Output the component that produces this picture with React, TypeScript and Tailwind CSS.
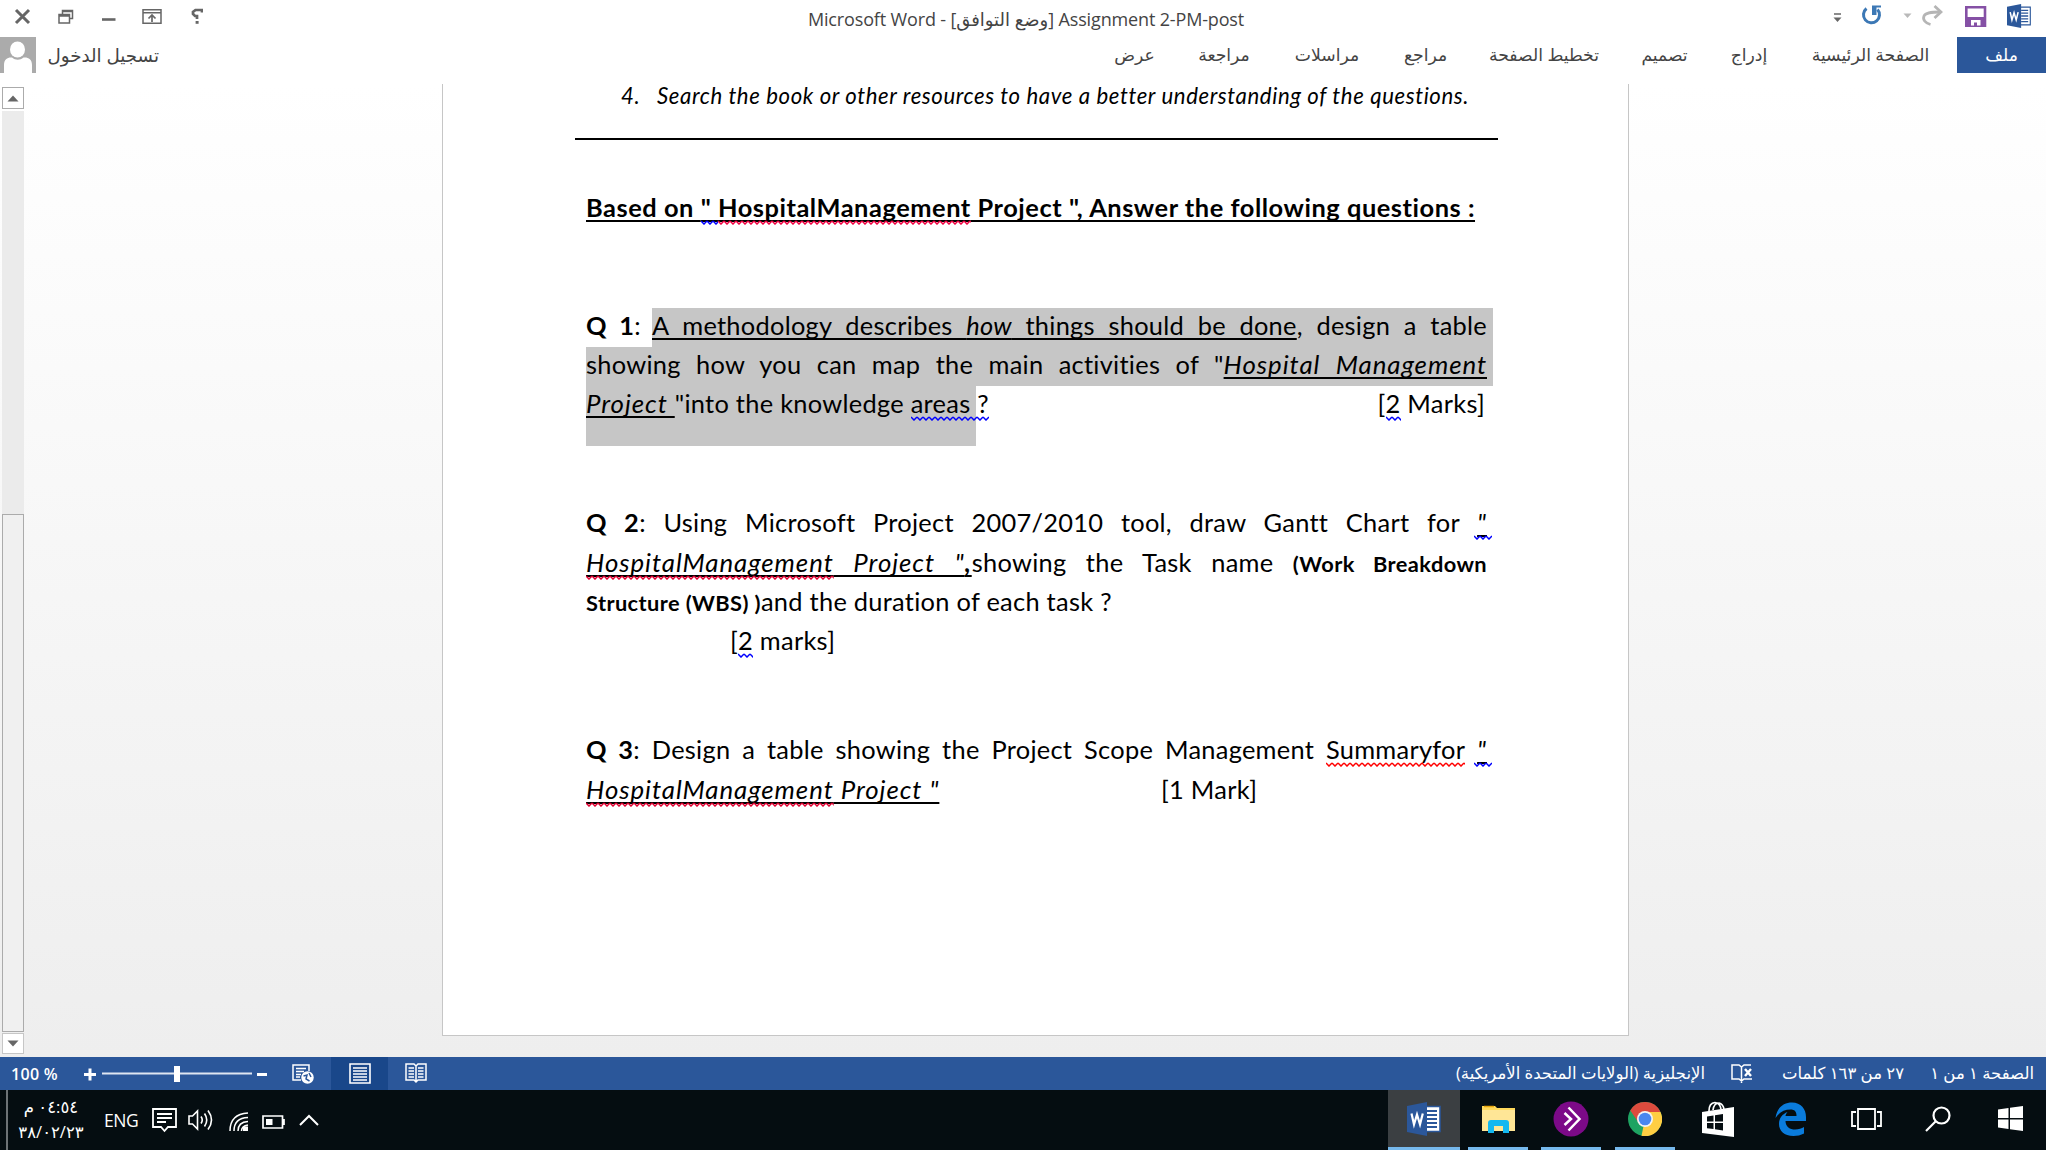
import { useId, type ReactNode } from "react";
import clsx from "clsx";

const TABS = [
  { label: "الصفحة الرئيسية", width: "w-[121px]" },
  { label: "إدراج", width: "w-[34px]" },
  { label: "تصميم", width: "w-[47px]" },
  { label: "تخطيط الصفحة", width: "w-[106px]" },
  { label: "مراجع", width: "w-[43px]" },
  { label: "مراسلات", width: "w-[66px]" },
  { label: "مراجعة", width: "w-[52px]" },
  { label: "عرض", width: "w-[39px]" },
];

const WordIcon = ({ className }: { className?: string }) => (
  <svg viewBox="0 0 34 34" className={className}>
    <path d="M18 4.500H33V29.500H18Z" fill="#fff" stroke="#2b579a" strokeWidth="1.600" />
    <path d="M20 9H30M20 13H30M20 17H30M20 21H30M20 25H30" stroke="#2b579a" strokeWidth="1.800" />
    <path d="M0 4L20 0V34L0 30Z" fill="#2b579a" />
    <path d="M4.500 11.500L7 22.500L10 12.500L13 22.500L15.800 11.500" fill="none" stroke="#fff" strokeWidth="2.200" />
  </svg>
);

const TitleBar = () => (
  <div className="flex h-[37px] shrink-0 text-[#666]">
    <div className="flex w-[700px] items-start pt-[8px] pl-[14px]">
      <svg width="17" height="17" viewBox="0 0 17 17" className="mr-[27px]">
        <path d="M2 2L15 15M15 2L2 15" stroke="currentColor" strokeWidth="3" />
      </svg>
      <svg width="16" height="17" viewBox="0 0 16 17" className="mr-[27px]">
        <path d="M4.500 6V2.500H14.500V10.500H12M4.500 3.500H14.500M1 6.500H11.500V15H1ZM1 8H11.500" fill="none" stroke="currentColor" strokeWidth="1.500" />
      </svg>
      <svg width="15" height="17" viewBox="0 0 15 17" className="mr-[26px]">
        <path d="M1 11.500H14.500" stroke="currentColor" strokeWidth="2.600" />
      </svg>
      <svg width="20" height="17" viewBox="0 0 20 17" className="mr-[29px]">
        <path d="M1 1.700H19V15.300H1ZM1 4.700H19" fill="none" stroke="currentColor" strokeWidth="1.500" />
        <path d="M10 14V7M6.500 10.500L10 7L13.500 10.500" fill="none" stroke="currentColor" strokeWidth="1.700" />
      </svg>
      <svg width="12" height="17" viewBox="0 0 12 17">
        <path d="M11 4.500V2H4.500L2 4V6L4 8H6V11" fill="none" stroke="currentColor" strokeWidth="2.700" />
        <path d="M4.600 13H7.600V15.800H4.600Z" fill="currentColor" />
      </svg>
    </div>
    <div dir="ltr" className="flex w-[652px] justify-center pt-[7px] text-[18px] leading-[24px] whitespace-nowrap text-[#444]">
      <span className="tracking-[-0.15px]">Microsoft Word - [</span>
      <span>وضع التوافق</span>
      <span className="tracking-[-0.15px]">] Assignment 2-PM-post</span>
    </div>
    <div className="flex flex-1 items-start justify-end pt-[4px] pr-[15px]">
      <svg width="9" height="12" viewBox="0 0 9 12" className="mt-[8px] mr-[19px]">
        <path d="M1 2H8" stroke="#666" strokeWidth="1.500" />
        <path d="M0.500 5.500H8.500L4.500 10Z" fill="#666" />
      </svg>
      <svg width="22" height="24" viewBox="0 0 22 24" className="mr-[20px]">
        <path d="M5.500 4.500A8 8 0 1 0 16.500 5.500" fill="none" stroke="#3c78b5" strokeWidth="3" />
        <path d="M11 1.500H20V3.500H15.500V11H11Z" fill="#3c78b5" />
      </svg>
      <svg width="9" height="7" viewBox="0 0 9 7" className="mt-[9px] mr-[9px]">
        <path d="M0.500 0.500H8.500L4.500 5Z" fill="#b9b9b9" />
      </svg>
      <svg width="22" height="24" viewBox="0 0 22 24" className="mr-[22px]">
        <path d="M9.500 20.500C4 19 1.500 15.500 3 12C4.500 8.800 9 8 19 8" fill="none" stroke="#b5b5b5" strokeWidth="2.800" />
        <path d="M13.500 2L20 8L13.500 14" fill="none" stroke="#b5b5b5" strokeWidth="2.800" />
      </svg>
      <svg width="22" height="24" viewBox="0 0 22 24" className="mr-[20px]">
        <path d="M1.300 3.300H20V21.700H1.300Z" fill="#fff" stroke="#8550a5" strokeWidth="2.600" />
        <path d="M2 13H20V22H2Z" fill="#8550a5" />
        <path d="M6 16H15.500V21.500H12V18.500H9V21.500H6Z" fill="#fff" />
      </svg>
      <WordIcon className="h-[24px] w-[24px]" />
    </div>
  </div>
);

const RibbonTabs = () => (
  <div className="flex h-[47px] shrink-0 justify-between">
    <div className="flex h-[36px] items-center">
      <svg width="36" height="36" viewBox="0 0 36 36">
        <path d="M0 0H36V36H0Z" fill="#ababab" />
        <ellipse cx="17.500" cy="12.500" rx="7.500" ry="8" fill="#fff" />
        <path d="M4 36V28C4 22 8 20 12 20.500C15.500 23.500 20 23.500 23.500 20.500C28 20 32 22 32 28V36Z" fill="#fff" />
      </svg>
      <span dir="rtl" className="ml-[11px] w-[112px] text-[18.3px] whitespace-nowrap text-[#444]">تسجيل الدخول</span>
    </div>
    <div dir="rtl" className="flex h-[36px] items-center text-[17.2px] text-[#444]">
      <div className="ml-[26px] flex h-full w-[89px] items-center justify-center bg-[#2b579a] text-white">ملف</div>
      <div className="flex gap-[44px]">
        {TABS.map((tab) => (
          <div key={tab.label} className={clsx("flex justify-center whitespace-nowrap", tab.width)}>
            {tab.label}
          </div>
        ))}
      </div>
    </div>
  </div>
);

const ScrollBar = () => (
  <div className="flex w-[24px] shrink-0 flex-col pt-[3px] pl-[2px]">
    <div className="flex h-[22px] items-center justify-center border border-[#ababab] bg-white">
      <svg width="12" height="7" viewBox="0 0 12 7">
        <path d="M0.500 6.500L6 0.500L11.500 6.500Z" fill="#666" />
      </svg>
    </div>
    <div className="mt-[2px] h-[403px] bg-[#ebebeb]" />
    <div className="h-[518px] border border-[#ababab] bg-[#f0f0f0]" />
    <div className="mt-px flex h-[21px] items-center justify-center border border-[#c6c6c6] bg-white">
      <svg width="12" height="7" viewBox="0 0 12 7">
        <path d="M0.500 0.500L6 6.500L11.500 0.500Z" fill="#666" />
      </svg>
    </div>
  </div>
);

// Proofing mark under a run of text: red for spelling, blue for grammar.
const Proof = ({ color, wide = false, children }: { color: string; wide?: boolean; children: ReactNode }) => {
  const id = useId();
  return (
    <span className="relative">
      {children}
      <svg className={clsx("absolute bottom-[-3px] h-[5px]", wide ? "left-[-3px] w-[18px]" : "left-0 w-full")}>
        <pattern id={id} width="6" height="5" patternUnits="userSpaceOnUse">
          <path d="M0 1L3 4L6 1" fill="none" stroke={color} strokeWidth="1.500" />
        </pattern>
        <rect width="100%" height="5" fill={`url(#${id})`} />
      </svg>
    </span>
  );
};

const U = ({ italic = false, children }: { italic?: boolean; children: ReactNode }) => (
  <span
    className={clsx(
      "underline decoration-2 underline-offset-[3px] [text-decoration-skip-ink:none]",
      italic && "text-[25.8px] tracking-[0.95px] italic",
    )}
  >
    {children}
  </span>
);

const Line = ({ justify = false, className, children }: { justify?: boolean; className?: string; children: ReactNode }) => (
  <div
    className={clsx(
      "h-[39px] leading-[35px]",
      justify ? "w-[901px] [text-align-last:justify]" : "whitespace-pre",
      className,
    )}
  >
    {children}
  </div>
);

const Page = () => (
  <div className="h-[952px] w-[1187px] border border-t-0 border-[#c6c6c6] bg-white text-[25.4px] tracking-[0.28px] text-black [font-family:Lato,Carlito,sans-serif] [font-variant-ligatures:none]">
    <div className="flex h-[54px] pl-[178px] text-[22.2px] leading-[24px] tracking-[0.6px] italic">
      <span className="w-[36px]">4.</span>
      <span className="whitespace-nowrap">Search the book or other resources to have a better understanding of the questions.</span>
    </div>
    <div className="ml-[132px] h-[2px] w-[923px] bg-black" />
    <div className="pl-[143px]">
      <Line className="mt-[50px] font-bold tracking-[0.54px]">
        <U>
          Based on <Proof color="#00f">" </Proof>
          <Proof color="#f00040">HospitalManagement</Proof> Project ", Answer the following questions :
        </U>
      </Line>

      <div className="mt-[79px] flex">
        <Line className="w-[66px] [word-spacing:6px]">
          <b>Q 1</b>:
        </Line>
        <div className="w-[841px] bg-[#c6c6c6]">
          <Line justify className="!w-[835px]">
            <U>
              A methodology describes <i>how</i> things should be done
            </U>
            , design a table
          </Line>
        </div>
      </div>
      <div className="w-[907px] bg-[#c6c6c6]">
        <Line justify>
          showing how you can map the main activities of "<U italic>Hospital Management</U>
        </Line>
      </div>
      <div className="flex h-[60px] w-[901px]">
        <Line className="!h-[60px] w-[390px] bg-[#c6c6c6]">
          <U italic>Project </U>"into the knowledge <Proof color="#00f">areas ?</Proof>
        </Line>
        <Line className="ml-auto pr-[2px]">
          [<Proof color="#00f">2</Proof> Marks]
        </Line>
      </div>

      <div className="mt-[59px]">
        <Line justify>
          <b>Q 2</b>: Using Microsoft Project 2007/2010 tool, draw Gantt Chart for{" "}
          <U italic>
            <Proof color="#00f" wide>"</Proof>
          </U>
        </Line>
        <Line justify className="!h-[40px] pt-px">
          <U italic>
            <Proof color="#e00030">HospitalManagement</Proof> Project "<b>,</b>
          </U>
          showing the Task name <b className="text-[21.8px] tracking-[0.4px]">(Work Breakdown</b>
        </Line>
        <Line>
          <b className="text-[21.8px] tracking-[0.4px]">Structure (WBS) )</b>and the duration of each task ?
        </Line>
        <Line className="pl-[144px]">
          [<Proof color="#00f">2</Proof> marks]
        </Line>
      </div>

      <div className="mt-[70px]">
        <Line justify className="!h-[40px]">
          <b>Q 3</b>: Design a table showing the Project Scope Management <Proof color="#f00">Summaryfor</Proof>{" "}
          <U italic>
            <Proof color="#00f" wide>"</Proof>
          </U>
        </Line>
        <div className="flex">
          <Line className="w-[575px]">
            <U italic>
              <Proof color="#e00030">HospitalManagement</Proof> Project "
            </U>
          </Line>
          <Line>[1 Mark]</Line>
        </div>
      </div>
    </div>
  </div>
);

const StatusBar = () => (
  <div className="flex h-[33px] shrink-0 items-center justify-between bg-[#2b579a] text-[16.5px] text-white">
    <div className="flex h-full items-center">
      <span className="ml-[11px] w-[73px] text-[16px] font-semibold tracking-[0.3px]">100 %</span>
      <svg width="184" height="18" viewBox="0 0 184 18">
        <path d="M0 9.500H12M6 3.500V15.500M173 9.500H183" stroke="#fff" strokeWidth="3" />
        <path d="M18 8.500H168" stroke="#dfe6f1" strokeWidth="2" />
        <path d="M90 1H96V17H90Z" fill="#fff" />
      </svg>
      <svg width="22" height="22" viewBox="0 0 22 22" className="mr-[17px] ml-[24px]" fill="none" stroke="#fff" strokeWidth="1.500">
        <path d="M9 17H1V2H17V8M4 5.500H14M4 8.500H12M4 11.500H9M4 14H8" />
        <circle cx="15.500" cy="14.500" r="5.500" fill="#fff" />
        <path d="M11.500 13L15 12L14 16L17.500 18M17 10L19 14" stroke="#2b579a" />
      </svg>
      <div className="flex h-full w-[57px] items-center justify-center bg-[#19478a]">
        <svg width="22" height="21" viewBox="0 0 22 21" fill="none" stroke="#fff" strokeWidth="1.600">
          <path d="M1 1H21V20H1ZM4 5H18M4 8H18M4 11H18M4 14H18M4 17H18" />
        </svg>
      </div>
      <svg width="22" height="21" viewBox="0 0 22 21" className="ml-[17px]" fill="none" stroke="#fff" strokeWidth="1.500">
        <path d="M11 3L9 1H1V17H9L11 19L13 17H21V1H13ZM11 3V20M3.500 5H9M3.500 8H9M3.500 11H9M3.500 14H9M13 5H18.500M13 8H18.500M13 11H18.500M13 14H18.500" />
      </svg>
    </div>
    <div dir="rtl" className="flex h-full items-center whitespace-nowrap">
      <span className="mr-[12px] w-[100px]">الصفحة ١ من ١</span>
      <span className="mr-[30px] w-[122px]">٢٧ من ١٦٣ كلمات</span>
      <svg width="22" height="21" viewBox="0 0 22 21" className="mr-[29px]" fill="none" stroke="#fff" strokeWidth="1.500">
        <path d="M20 2H13L10.500 4L8 2H1V16H8L10.500 18L13 16H21M10.500 4V20" />
        <path d="M14 6L20 13M20 6L14 13" strokeWidth="2.400" />
      </svg>
      <span className="mr-[26px] w-[250px]">الإنجليزية (الولايات المتحدة الأمريكية)</span>
    </div>
  </div>
);

const TaskButton = ({ open = false, active = false, className, children }: { open?: boolean; active?: boolean; className: string; children: ReactNode }) => (
  <div
    className={clsx(
      "flex h-full items-center justify-center border-b-3",
      open ? "border-[#76b9ed]" : "border-transparent",
      active && "bg-[#3b3f42]",
      className,
    )}
  >
    {children}
  </div>
);

const TaskBar = () => (
  <div className="flex h-[60px] shrink-0 justify-between bg-[#050d11] text-white">
    <div className="flex">
      <div className="ml-[6px] w-[2px] bg-[#6d7275]" />
      <div className="ml-[5px] flex w-[76px] flex-col items-center pt-[4px] text-[16.5px] leading-[25px] whitespace-nowrap">
        <span dir="rtl">٠٤:٥٤ م</span>
        <span dir="ltr">٣٨/٠٢/٢٣</span>
      </div>
      <div className="flex items-center">
        <span className="ml-[15px] w-[48px] text-[17.5px] tracking-[-0.4px]">ENG</span>
        <svg width="25" height="26" viewBox="0 0 25 26" fill="none" stroke="#fff" strokeWidth="1.800">
          <path d="M1 2H24V20H16L12.500 24L9 20H1ZM5 7H20M5 11H20M5 15H14" />
        </svg>
        <svg width="26" height="24" viewBox="0 0 26 24" className="ml-[11px]" fill="none" stroke="#fff" strokeWidth="1.600">
          <path d="M1 8H4.500L9.500 3V21L4.500 16H1ZM13 8.500Q15.500 12 13 15.500M16.500 5.500Q21 12 16.500 18.500M20 2.500Q27 12 20 21.500" />
        </svg>
        <svg width="20" height="20" viewBox="0 0 20 20" className="mt-[4px] ml-[15px]" fill="none" stroke="#fff" strokeWidth="1.500">
          <path d="M1 19Q1 2 19 1M5 19Q5 6 19 5.500M9 19Q9 10 19 9.500M12.500 19Q12.500 14 19 13" />
          <path d="M14 14.500H19V19H14Z" fill="#fff" stroke="none" />
        </svg>
        <svg width="23" height="14" viewBox="0 0 23 14" className="mt-[3px] ml-[13px]" fill="none" stroke="#fff" strokeWidth="1.700">
          <path d="M1 1H20.500V13H1ZM22 4V10" />
          <path d="M4 4H10.500V10H4Z" fill="#fff" stroke="none" />
        </svg>
        <svg width="20" height="12" viewBox="0 0 20 12" className="ml-[14px]" fill="none" stroke="#fff" strokeWidth="2">
          <path d="M1 11L10 2L19 11" />
        </svg>
      </div>
    </div>
    <div className="flex">
      <TaskButton open active className="w-[72px]">
        <WordIcon className="h-[34px] w-[34px]" />
      </TaskButton>
      <TaskButton open className="ml-[8px] w-[60px]">
        <svg width="33" height="28" viewBox="0 0 33 28">
          <path d="M0 1H13L15 3H33V26H0Z" fill="#ffd95c" />
          <path d="M0 5H33V26H0Z" fill="#ffe696" />
          <path d="M2 1.500H12" stroke="#e8a70c" strokeWidth="1.500" />
          <path d="M6 28V18Q6 15 9 15H24Q27 15 27 18V28H21V21H12V28Z" fill="#14b8f0" />
        </svg>
      </TaskButton>
      <TaskButton open className="ml-[13px] w-[60px]">
        <svg width="36" height="36" viewBox="0 0 36 36">
          <circle cx="18" cy="18" r="17.500" fill="#7c0a88" />
          <path d="M11.500 12L18 18L11.500 24M15.500 6.500L26.500 18L15.500 29.500" fill="none" stroke="#fff" strokeWidth="2.500" />
        </svg>
      </TaskButton>
      <TaskButton open className="ml-[14px] w-[60px]">
        <svg width="34" height="34" viewBox="0 0 34 34">
          <circle cx="17" cy="17" r="17" fill="#1ea362" />
          <path d="M17 17L13.500 33.700A17 17 0 0 0 32.500 10H17Z" fill="#ffce43" />
          <path d="M2.300 8.500A17 17 0 0 1 32.500 10H17L10.500 20.500Z" fill="#dd4b3e" />
          <circle cx="17" cy="17" r="8" fill="#f4f4f4" />
          <circle cx="17" cy="17" r="6.300" fill="#4a87f0" />
        </svg>
      </TaskButton>
      <TaskButton className="ml-[14px] w-[56px]">
        <svg width="33" height="36" viewBox="0 0 33 36">
          <path d="M8 10Q8 2 14 1.500Q19 2 20 8M12 9Q13 2 18 2Q22 3 23 8" fill="none" stroke="#fff" strokeWidth="1.700" />
          <path d="M1 11L33 6V36L1 32Z" fill="#fff" />
          <path d="M6 15.500L12.500 14.500V20.500H6ZM14 14.300L22 13V20.500H14ZM6 22H12.500V28L6 27.300ZM14 22H22V29.500L14 28.300Z" fill="#050d11" />
        </svg>
      </TaskButton>
      <TaskButton className="ml-[20px] w-[52px]">
        <svg width="32" height="34" viewBox="0 0 32 34">
          <path d="M0.500 16C2 5 9 0.500 17 0.500C26 0.500 31 7 31 15V19H10.500C10.500 25 15 27.500 20 27.500C24 27.500 26.500 26.500 29 25V31.500C26 33.200 22 34 18.500 34C9 34 4 28.500 4 22C4 16 7.500 12 12.500 10C11 11.500 10.500 13.500 10.500 14H21.500C21.500 9.500 19.500 7.500 15.500 7.500C9 7.500 4 10.500 0.500 16Z" fill="#0a7bdc" />
        </svg>
      </TaskButton>
      <TaskButton className="ml-[23px] w-[52px]">
        <svg width="31" height="24" viewBox="0 0 31 24" fill="none" stroke="#fff" strokeWidth="1.800">
          <path d="M7 2H24V22H7ZM5 5H1V19H5M26 5H30V19H26" />
        </svg>
      </TaskButton>
      <TaskButton className="ml-[20px] w-[52px]">
        <svg width="26" height="26" viewBox="0 0 26 26" fill="none" stroke="#fff" strokeWidth="2.200">
          <circle cx="16.500" cy="9.500" r="8" />
          <path d="M11 15L1 25" />
        </svg>
      </TaskButton>
      <TaskButton className="mr-[10px] ml-[20px] w-[52px]">
        <svg width="25" height="25" viewBox="0 0 25 25" fill="#fff">
          <path d="M0 3.500L10.500 2V12H0ZM12 1.800L25 0V12H12ZM0 13.500H10.500V23L0 21.500ZM12 13.500H25V25L12 23.200Z" />
        </svg>
      </TaskButton>
    </div>
  </div>
);

export default function App() {
  return (
    <div className="flex h-[1150px] w-[2046px] flex-col overflow-hidden bg-white [font-family:'Open_Sans','DejaVu_Sans',sans-serif]">
      <TitleBar />
      <RibbonTabs />
      <div className="flex h-[973px] shrink-0 bg-linear-to-b from-white to-[#eee]">
        <ScrollBar />
        <div className="ml-[418px]">
          <Page />
        </div>
      </div>
      <StatusBar />
      <TaskBar />
    </div>
  );
}
